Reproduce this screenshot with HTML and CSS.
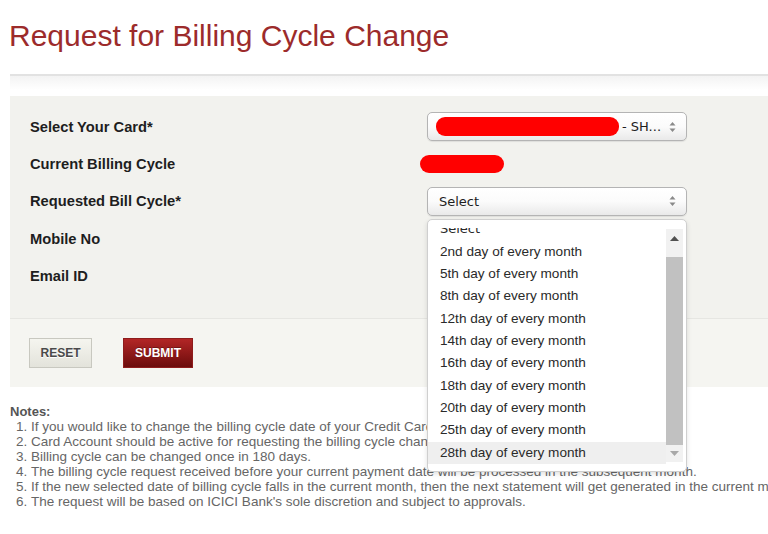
FILE: index.html
```html
<!DOCTYPE html>
<html>
<head>
<meta charset="utf-8">
<link rel="stylesheet" href="styles.css">
</head>
<body>
<div class="page">
  <h1 class="title">Request for Billing Cycle Change</h1>
  <div class="sep"></div>
  <div class="panel">
    <div class="form">
      <div class="label">Select Your Card*</div>
      <div class="value">
        <div class="select">
          <span class="redact r1"></span><span class="sel-text card-text">- SH...</span>
          <svg class="arrows" width="7" height="12" viewBox="0 0 7 12"><path d="M0.5 4.5 L3.5 1 L6.5 4.5 Z M0.5 7.5 L3.5 11 L6.5 7.5 Z" fill="#8a8a8a"/></svg>
        </div>
      </div>
      <div class="label">Current Billing Cycle</div>
      <div class="value"><span class="redact r2"></span></div>
      <div class="label">Requested Bill Cycle*</div>
      <div class="value dd-wrap">
        <div class="select">
          <span class="sel-text plain">Select</span>
          <svg class="arrows" width="7" height="12" viewBox="0 0 7 12"><path d="M0.5 4.5 L3.5 1 L6.5 4.5 Z M0.5 7.5 L3.5 11 L6.5 7.5 Z" fill="#8a8a8a"/></svg>
        </div>
        <div class="listbox">
          <div class="items">
            <div class="items-inner">
              <div class="item first">Select</div>
              <div class="item">2nd day of every month</div>
              <div class="item">5th day of every month</div>
              <div class="item">8th day of every month</div>
              <div class="item">12th day of every month</div>
              <div class="item">14th day of every month</div>
              <div class="item">16th day of every month</div>
              <div class="item">18th day of every month</div>
              <div class="item">20th day of every month</div>
              <div class="item">25th day of every month</div>
              <div class="item hl">28th day of every month</div>
            </div>
          </div>
          <div class="scrollbar">
            <div class="sb-btn up"><svg width="9" height="5" viewBox="0 0 9 5"><path d="M0 5 L4.5 0 L9 5 Z" fill="#505050"/></svg></div>
            <div class="sb-track"><div class="sb-thumb"></div></div>
            <div class="sb-btn down"><svg width="9" height="5" viewBox="0 0 9 5"><path d="M0 0 L4.5 5 L9 0 Z" fill="#a8a8a8"/></svg></div>
          </div>
        </div>
      </div>
      <div class="label">Mobile No</div>
      <div class="value"></div>
      <div class="label">Email ID</div>
      <div class="value"></div>
    </div>
    <div class="actions">
      <button class="btn reset">RESET</button>
      <button class="btn submit">SUBMIT</button>
    </div>
  </div>
  <div class="notes">
    <div class="notes-title">Notes:</div>
    <ol class="notes-list">
      <li>If you would like to change the billing cycle date of your Credit Card, please select a new date.</li>
      <li>Card Account should be active for requesting the billing cycle change.</li>
      <li>Billing cycle can be changed once in 180 days.</li>
      <li>The billing cycle request received before your current payment date will be processed in the subsequent month.</li>
      <li>If the new selected date of billing cycle falls in the current month, then the next statement will get generated in the current month.</li>
      <li>The request will be based on ICICI Bank's sole discretion and subject to approvals.</li>
    </ol>
  </div>
</div>
</body>
</html>
```

FILE: styles.css
```css
html, body {
  margin: 0;
  padding: 0;
  overflow: hidden;
  background: #ffffff;
}

.page {
  padding-left: 10px;
  width: 1100px;
  font-family: "Liberation Sans", Arial, sans-serif;
}

.title {
  margin: 19px 0 0 -1px;
  font-size: 30px;
  line-height: 34px;
  font-weight: normal;
  color: #9c2b2b;
}

.sep {
  margin-top: 21px;
  height: 20px;
  border-top: 2px solid #e2e2e2;
  background: linear-gradient(#f3f3f3, #ffffff 70%);
}

.panel {
  background: #f2f2ee;
}

.form {
  display: grid;
  grid-template-columns: 397px 260px;
  grid-auto-rows: 37.3px;
  align-items: center;
  padding: 12px 0 23.5px 20px;
}

.label {
  font-size: 14.7px;
  font-weight: bold;
  color: #1e1e1e;
}

.value {
  display: flex;
  align-items: center;
}

.dd-wrap {
  position: relative;
}

.select {
  box-sizing: border-box;
  width: 260px;
  height: 29px;
  display: flex;
  align-items: center;
  padding-left: 8px;
  border: 1px solid #b4b4b4;
  border-radius: 5px;
  background: linear-gradient(#ffffff, #fbfbfb 50%, #e9e9e9);
  box-shadow: 0 1px 1px rgba(0,0,0,0.08);
}

.sel-text {
  font-family: "DejaVu Sans", Verdana, sans-serif;
  font-size: 13px;
  color: #1e1e1e;
}

.card-text {
  margin-left: 3px;
}

.plain {
  margin-left: 3px;
}

.arrows {
  margin-left: auto;
  margin-right: 10px;
}

.redact {
  display: inline-block;
  background: #ff0000;
  border-radius: 9px;
}

.r1 {
  width: 183px;
  height: 19px;
}

.r2 {
  width: 84px;
  height: 18px;
  margin-left: -7px;
}

.listbox {
  position: absolute;
  top: 32px;
  left: 0;
  z-index: 5;
  box-sizing: border-box;
  width: 260px;
  height: 253px;
  padding: 8px 0 6px 0;
  display: flex;
  background: #ffffff;
  border: 1px solid #cfcfcf;
  border-radius: 5px;
  box-shadow: 0 2px 5px rgba(0,0,0,0.12);
  overflow: hidden;
}

.items {
  flex: 1;
  overflow: hidden;
  height: 237px;
}

.items-inner {
  margin-top: -9.3px;
}

.item {
  height: 22.33px;
  line-height: 22.33px;
  padding-left: 12px;
  font-size: 13.6px;
  color: #2a2a2a;
  white-space: nowrap;
}

.item.first {
  font-family: "DejaVu Sans", Verdana, sans-serif;
  font-size: 13px;
}

.item.hl {
  background: #efefef;
}

.scrollbar {
  width: 17px;
  height: 233px;
  margin: 1px 3px 0 0;
  display: flex;
  flex-direction: column;
  background: #f1f1f1;
}

.sb-btn {
  display: flex;
  align-items: center;
  justify-content: center;
}

.sb-btn.up {
  height: 20px;
}

.sb-btn.down {
  height: 17px;
}

.sb-track {
  flex: 1;
  display: flex;
  flex-direction: column;
  justify-content: flex-end;
}

.sb-thumb {
  height: 187.5px;
  background: #c1c1c1;
}

.actions {
  border-top: 1px solid #e6e6e2;
  background: #f5f5f1;
  display: flex;
  gap: 31px;
  padding: 19px 0 19px 19px;
}

.btn {
  height: 30px;
  margin: 0;
  padding: 0;
  font-family: "Liberation Sans", Arial, sans-serif;
  font-size: 12px;
  font-weight: bold;
  border-radius: 0;
}

.reset {
  width: 63px;
  color: #4a4a4a;
  border: 1px solid #c8c8c0;
  background: linear-gradient(#f5f5ef, #e3e3db);
  text-shadow: 0 1px 0 #ffffff;
}

.submit {
  width: 70px;
  color: #ffffff;
  border: 1px solid #8e1c1c;
  background: linear-gradient(#b22626, #6c0c0c);
  text-shadow: 0 -1px 0 rgba(0,0,0,0.3);
}

.notes {
  margin-top: 17.5px;
  white-space: nowrap;
  line-height: 15px;
}

.notes-title {
  font-size: 13px;
  font-weight: bold;
  color: #555555;
}

.notes-list {
  margin: 0;
  padding-left: 6px;
  list-style: decimal inside;
  font-size: 13.5px;
  color: #666666;
}
```
